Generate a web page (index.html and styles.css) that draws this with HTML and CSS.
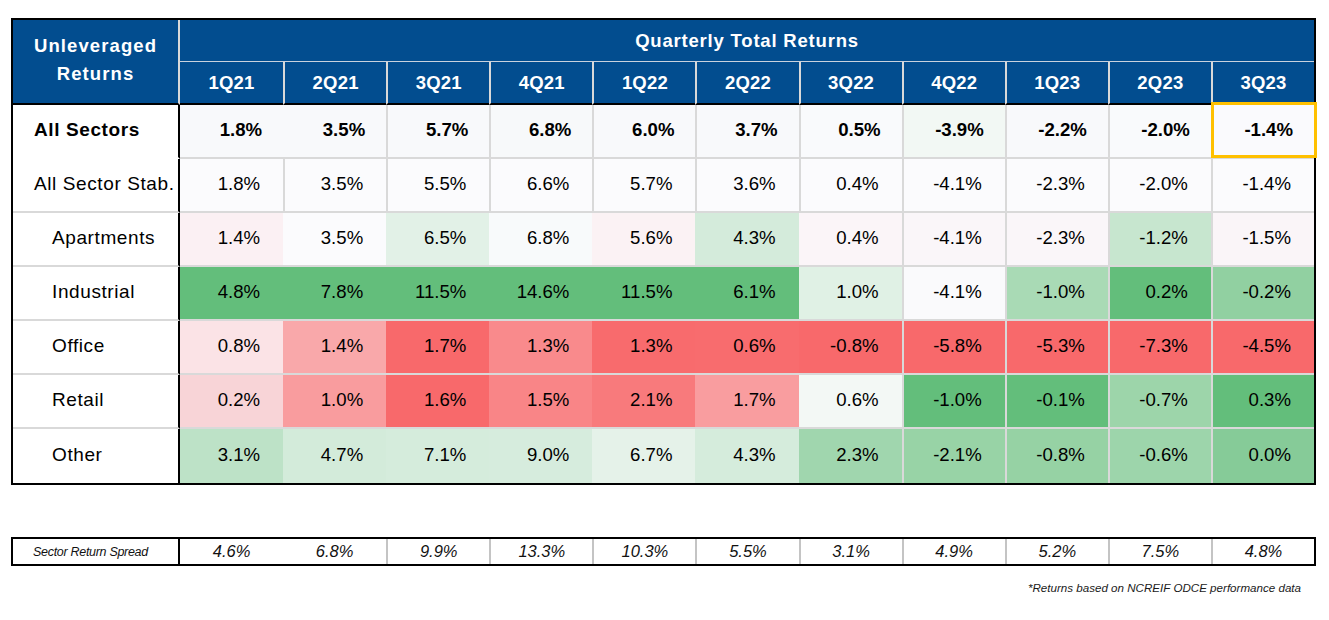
FILE: index.html
```html
<!DOCTYPE html>
<html lang="en">
<head>
<meta charset="utf-8">
<title>Quarterly Total Returns</title>
<link rel="stylesheet" href="styles.css">
</head>
<body>
<div class="sheet">
  <div class="grid heat">
    <div class="hd corner">Unleveraged<br>Returns</div>
    <div class="hd title">Quarterly Total Returns</div>
    <div class="hd q q0">1Q21</div>
    <div class="hd q">2Q21</div>
    <div class="hd q">3Q21</div>
    <div class="hd q">4Q21</div>
    <div class="hd q">1Q22</div>
    <div class="hd q">2Q22</div>
    <div class="hd q">3Q22</div>
    <div class="hd q">4Q22</div>
    <div class="hd q">1Q23</div>
    <div class="hd q">2Q23</div>
    <div class="hd q">3Q23</div>

    <div class="c lbl b nobot">All Sectors</div>
    <div class="c v b" style="background:#f8f9fb">1.8%</div>
    <div class="c v b" style="background:#f8f9fb">3.5%</div>
    <div class="c v b gl" style="background:#f8f9fb">5.7%</div>
    <div class="c v b gl" style="background:#f7f9fa">6.8%</div>
    <div class="c v b gl" style="background:#f8f9fb">6.0%</div>
    <div class="c v b gl" style="background:#f8f9fb">3.7%</div>
    <div class="c v b gl" style="background:#f9fafc">0.5%</div>
    <div class="c v b gl" style="background:#f2f8f4">-3.9%</div>
    <div class="c v b gl" style="background:#f8f9fb">-2.2%</div>
    <div class="c v b gl" style="background:#f9fafc">-2.0%</div>
    <div class="c v b gl hilite" style="background:#fafafd">-1.4%</div>

    <div class="c lbl">All Sector Stab.</div>
    <div class="c v" style="background:#fbfbfd">1.8%</div>
    <div class="c v gl" style="background:#fbfbfd">3.5%</div>
    <div class="c v gl" style="background:#fbfbfd">5.5%</div>
    <div class="c v gl" style="background:#fbfbfd">6.6%</div>
    <div class="c v gl" style="background:#fbfbfd">5.7%</div>
    <div class="c v gl" style="background:#fbfbfd">3.6%</div>
    <div class="c v gl" style="background:#fbfbfd">0.4%</div>
    <div class="c v gl" style="background:#fbfbfd">-4.1%</div>
    <div class="c v gl" style="background:#fbfbfd">-2.3%</div>
    <div class="c v gl" style="background:#fbfbfd">-2.0%</div>
    <div class="c v gl" style="background:#fbfbfd">-1.4%</div>

    <div class="c lbl sub">Apartments</div>
    <div class="c v" style="background:#fbf0f3">1.4%</div>
    <div class="c v" style="background:#fbfbfd">3.5%</div>
    <div class="c v" style="background:#e2f1e7">6.5%</div>
    <div class="c v" style="background:#f8fafb">6.8%</div>
    <div class="c v" style="background:#fbf2f4">5.6%</div>
    <div class="c v" style="background:#d4ebdb">4.3%</div>
    <div class="c v" style="background:#fbf5f8">0.4%</div>
    <div class="c v gl" style="background:#faf6f9">-4.1%</div>
    <div class="c v gl" style="background:#faf6f9">-2.3%</div>
    <div class="c v gl" style="background:#c7e6cf">-1.2%</div>
    <div class="c v gl" style="background:#faf5f8">-1.5%</div>

    <div class="c lbl sub">Industrial</div>
    <div class="c v" style="background:#63be7b">4.8%</div>
    <div class="c v" style="background:#63be7b">7.8%</div>
    <div class="c v" style="background:#63be7b">11.5%</div>
    <div class="c v" style="background:#63be7b">14.6%</div>
    <div class="c v" style="background:#63be7b">11.5%</div>
    <div class="c v" style="background:#63be7b">6.1%</div>
    <div class="c v" style="background:#e0f1e5">1.0%</div>
    <div class="c v gl" style="background:#fafafc">-4.1%</div>
    <div class="c v gl" style="background:#a9dab5">-1.0%</div>
    <div class="c v gl" style="background:#63be7b">0.2%</div>
    <div class="c v gl" style="background:#91d0a1">-0.2%</div>

    <div class="c lbl sub">Office</div>
    <div class="c v" style="background:#fbe3e6">0.8%</div>
    <div class="c v" style="background:#f9a8aa">1.4%</div>
    <div class="c v" style="background:#f8696b">1.7%</div>
    <div class="c v" style="background:#f98a8c">1.3%</div>
    <div class="c v" style="background:#f86b6d">1.3%</div>
    <div class="c v" style="background:#f86c6e">0.6%</div>
    <div class="c v" style="background:#f8696b">-0.8%</div>
    <div class="c v gl" style="background:#f8696b">-5.8%</div>
    <div class="c v gl" style="background:#f8696b">-5.3%</div>
    <div class="c v gl" style="background:#f8696b">-7.3%</div>
    <div class="c v gl" style="background:#f8696b">-4.5%</div>

    <div class="c lbl sub">Retail</div>
    <div class="c v" style="background:#f8d4d7">0.2%</div>
    <div class="c v" style="background:#f99c9e">1.0%</div>
    <div class="c v" style="background:#f8696b">1.6%</div>
    <div class="c v" style="background:#f98587">1.5%</div>
    <div class="c v" style="background:#f87a7c">2.1%</div>
    <div class="c v" style="background:#f99d9f">1.7%</div>
    <div class="c v" style="background:#f3f8f5">0.6%</div>
    <div class="c v gl" style="background:#63be7b">-1.0%</div>
    <div class="c v gl" style="background:#63be7b">-0.1%</div>
    <div class="c v gl" style="background:#9dd5aa">-0.7%</div>
    <div class="c v gl" style="background:#63be7b">0.3%</div>

    <div class="c lbl sub last">Other</div>
    <div class="c v last" style="background:#bde2c7">3.1%</div>
    <div class="c v last" style="background:#d3ebda">4.7%</div>
    <div class="c v last" style="background:#d5ecdc">7.1%</div>
    <div class="c v last" style="background:#d6ecdd">9.0%</div>
    <div class="c v last" style="background:#e5f2e9">6.7%</div>
    <div class="c v last" style="background:#d5ecdc">4.3%</div>
    <div class="c v last" style="background:#a0d6ae">2.3%</div>
    <div class="c v gl last" style="background:#98d3a6">-2.1%</div>
    <div class="c v gl last" style="background:#96d2a4">-0.8%</div>
    <div class="c v gl last" style="background:#9dd5ab">-0.6%</div>
    <div class="c v gl last" style="background:#86cb98">0.0%</div>
  </div>

  <div class="grid spread">
    <div class="s-lbl">Sector Return Spread</div>
    <div class="s-v">4.6%</div>
    <div class="s-v">6.8%</div>
    <div class="s-v sl">9.9%</div>
    <div class="s-v sl">13.3%</div>
    <div class="s-v sl">10.3%</div>
    <div class="s-v sl">5.5%</div>
    <div class="s-v sl">3.1%</div>
    <div class="s-v sl">4.9%</div>
    <div class="s-v sl">5.2%</div>
    <div class="s-v sl">7.5%</div>
    <div class="s-v sl">4.8%</div>
  </div>

  <p class="note">*Returns based on NCREIF ODCE performance data</p>
</div>
</body>
</html>
```

FILE: styles.css
```css
* {
  box-sizing: border-box;
}

body {
  margin: 0;
  background: #ffffff;
  color: #000000;
  font-family: "Liberation Sans", Arial, sans-serif;
}

.sheet {
  width: 1305px;
  margin: 18px 0 0 11px;
}

.grid {
  display: grid;
  grid-template-columns: 167px repeat(11, 1fr);
  border: 2px solid #000000;
  width: 1305px;
}

.heat {
  grid-template-rows: 42px 43px repeat(7, 54px);
}

/* header */
.hd {
  background: #024d8f;
  color: #ffffff;
  font-weight: bold;
  font-size: 18.5px;
  display: flex;
  align-items: center;
  justify-content: center;
  text-align: center;
}

.corner {
  grid-row: 1 / span 2;
  border-right: 2px solid #d9d9d9;
  border-bottom: 2px solid #000000;
  letter-spacing: 1.1px;
  line-height: 28px;
  padding-bottom: 4px;
}

.title {
  grid-column: 2 / span 11;
  border-bottom: 1px solid #c9d2de;
  letter-spacing: 0.8px;
}

.q {
  border-left: 2px solid #d9d9d9;
  border-bottom: 2px solid #000000;
  letter-spacing: 0.2px;
}

.q0 {
  border-left: 0;
}

/* body cells */
.c {
  display: flex;
  align-items: center;
  border-bottom: 2px solid #d9d9d9;
  font-size: 18.6px;
}

.lbl {
  background: #ffffff;
  border-right: 2px solid #000000;
  padding-left: 21px;
  font-size: 19px;
  letter-spacing: 0.6px;
  padding-bottom: 2px;
}

.lbl.sub {
  padding-left: 39px;
}

.nobot {
  border-bottom-color: #ffffff;
}

.v {
  justify-content: flex-end;
  padding-right: 23px;
  padding-bottom: 2px;
}

.b {
  font-weight: bold;
}

.v.b {
  padding-right: 21px;
}

.gl {
  border-left: 2px solid #d9d9d9;
}

.last {
  border-bottom: 0;
}

.hilite {
  position: relative;
}

.hilite::after {
  content: "";
  position: absolute;
  top: -3px;
  left: -2px;
  right: -3px;
  bottom: -1px;
  border: 3px solid #ffc000;
}

/* spread row */
.spread {
  margin-top: 52px;
  grid-template-rows: 25px;
}

.s-lbl {
  border-right: 2px solid #000000;
  font-style: italic;
  font-size: 12.5px;
  letter-spacing: -0.3px;
  padding-left: 20px;
  display: flex;
  align-items: center;
  color: #111111;
}

.s-v {
  display: flex;
  align-items: center;
  justify-content: center;
  font-style: italic;
  font-size: 16.5px;
  color: #111111;
}

.sl {
  border-left: 2px solid #c4c4c4;
}

.note {
  margin: 15px 0 0 0;
  padding-right: 15px;
  text-align: right;
  font-style: italic;
  font-size: 11.6px;
  line-height: 14px;
  color: #1a1a1a;
}
```
